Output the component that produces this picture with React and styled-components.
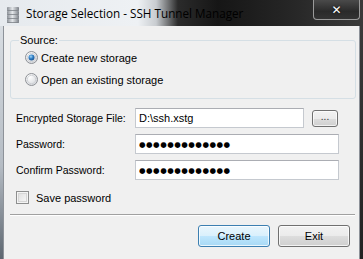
import styled, { createGlobalStyle } from "styled-components";

const GlobalStyle = createGlobalStyle`
  html, body {
    margin: 0;
    padding: 0;
    background: #1e1e1e;
  }
  * {
    box-sizing: border-box;
  }
`;

function StorageIcon() {
  return (
    <svg width="16" height="16" viewBox="0 0 16 16">
      <defs>
        <linearGradient id="disc" x1="0" y1="0" x2="1" y2="0">
          <stop offset="0" stopColor="#8a8f96" />
          <stop offset="0.45" stopColor="#e4e7ea" />
          <stop offset="1" stopColor="#7b8087" />
        </linearGradient>
      </defs>
      {[0, 4, 8, 12].map((y) => (
        <g key={y}>
          <rect x="2" y={y} width="12" height="3.4" rx="0.8" fill="url(#disc)" />
          <rect x="2" y={y + 3.4} width="12" height="0.6" fill="#5d6168" />
        </g>
      ))}
    </svg>
  );
}

function Radio({ checked }) {
  return (
    <svg width="13" height="13" viewBox="0 0 13 13">
      <defs>
        <radialGradient id="rbg" cx="0.35" cy="0.3" r="0.8">
          <stop offset="0" stopColor="#ffffff" />
          <stop offset="1" stopColor="#d3d6da" />
        </radialGradient>
        <radialGradient id="rdot" cx="0.4" cy="0.35" r="0.7">
          <stop offset="0" stopColor="#a6d8f8" />
          <stop offset="0.5" stopColor="#2f7fc6" />
          <stop offset="1" stopColor="#1b4f8a" />
        </radialGradient>
      </defs>
      <circle cx="6.5" cy="6.5" r="6" fill="url(#rbg)" stroke="#8e9196" strokeWidth="1" />
      <circle cx="6.5" cy="6.5" r="4.2" fill="none" stroke="#c9ccd0" strokeWidth="0.8" />
      {checked && <circle cx="6.5" cy="6.5" r="3" fill="url(#rdot)" />}
    </svg>
  );
}

export default function App() {
  return (
    <>
      <GlobalStyle />
      <Window>
        <TitleBar>
          <IconSlot>
            <StorageIcon />
          </IconSlot>
          <Title>Storage Selection - SSH Tunnel Manager</Title>
          <CloseButton>✕</CloseButton>
        </TitleBar>
        <Body>
          <SideFrame $side="left" />
          <Client>
            <GroupBox>
              <Legend>Source:</Legend>
              <RadioRow>
                <Radio checked />
                <Text>Create new storage</Text>
              </RadioRow>
              <RadioRow>
                <Radio />
                <Text>Open an existing storage</Text>
              </RadioRow>
            </GroupBox>

            <Form>
              <Label>Encrypted Storage File:</Label>
              <FieldWithButton>
                <TextBox readOnly value="D:\ssh.xstg" />
                <BrowseButton>...</BrowseButton>
              </FieldWithButton>
              <Label>Password:</Label>
              <TextBox readOnly $secret value={"●".repeat(13)} />
              <Label>Confirm Password:</Label>
              <TextBox readOnly $secret value={"●".repeat(13)} />
            </Form>

            <CheckRow>
              <CheckBox />
              <Text>Save password</Text>
            </CheckRow>

            <Separator />

            <ButtonRow>
              <PushButton $default>Create</PushButton>
              <PushButton>Exit</PushButton>
            </ButtonRow>
          </Client>
          <SideFrame $side="right" />
        </Body>
      </Window>
    </>
  );
}

const Window = styled.div`
  width: 363px;
  height: 259px;
  display: flex;
  flex-direction: column;
  overflow: hidden;
  font-family: "Liberation Sans", Arial, sans-serif;
`;

const TitleBar = styled.div`
  height: 26px;
  flex-shrink: 0;
  display: flex;
  align-items: flex-start;
  position: relative;
  background: linear-gradient(
    90deg,
    #e6eaee 0%,
    #eef1f4 38%,
    #c8ccd0 43%,
    #2b2b2b 49%,
    #161616 60%,
    #262626 80%,
    #3a3a3a 100%
  );
`;

const IconSlot = styled.div`
  width: 16px;
  height: 16px;
  margin: 7px 0 0 5px;
`;

const Title = styled.div`
  margin: 4px 0 0 5px;
  font-family: "Open Sans", "Noto Sans", sans-serif;
  font-size: 11.7px;
  line-height: 18px;
  color: #000;
  white-space: nowrap;
`;

const CloseButton = styled.div`
  position: absolute;
  top: 0;
  right: 3px;
  width: 47px;
  height: 20px;
  border: 1px solid #9a9a9a;
  border-top: none;
  border-radius: 0 0 4px 4px;
  background: linear-gradient(#4a4a4a, #2a2a2a 60%, #333);
  color: #fff;
  font-family: "DejaVu Sans", sans-serif;
  font-weight: bold;
  font-size: 12px;
  display: flex;
  align-items: center;
  justify-content: center;
  text-shadow: 0 0 2px #000;
`;

const Body = styled.div`
  flex: 1;
  display: flex;
`;

const SideFrame = styled.div`
  width: 4px;
  background: ${(p) =>
    p.$side === "left"
      ? "linear-gradient(#d8dde2, #b5bcc4 60%, #5d6670)"
      : "linear-gradient(#3a3a3a, #222)"};
  border-${(p) => (p.$side === "left" ? "right" : "left")}: 1px solid #8d9299;
`;

const Client = styled.div`
  flex: 1;
  background: #f0f0f0;
  padding: 8px 0 0 6px;
  display: flex;
  flex-direction: column;
`;

const GroupBox = styled.fieldset`
  margin: 0;
  width: 346px;
  height: 65px;
  border: 1px solid #d5dfe5;
  border-radius: 3px;
  padding: 5px 0 0 14px;
  display: flex;
  flex-direction: column;
  gap: 9px;
`;

const Legend = styled.legend`
  font-size: 11px;
  color: #000;
  padding: 0 1px;
  margin-left: -6px;
`;

const RadioRow = styled.div`
  display: flex;
  align-items: center;
  gap: 2px;
  height: 13px;
`;

const Text = styled.span`
  font-size: 11px;
  color: #000;
  margin-left: 1px;
`;

const Form = styled.div`
  display: grid;
  grid-template-columns: 119px 204px;
  row-gap: 6px;
  align-items: center;
  margin: 9px 0 0 6px;
`;

const Label = styled.span`
  font-size: 10.5px;
  color: #000;
`;

const FieldWithButton = styled.div`
  display: flex;
  align-items: center;
  gap: 8px;
  width: 204px;
`;

const TextBox = styled.input`
  width: ${(p) => (p.$secret ? "204px" : "169px")};
  height: 20px;
  border: 1px solid #c5c9cf;
  border-top-color: #abadb3;
  background: #fff;
  padding: 0 0 0 3px;
  margin: 0;
  outline: none;
  font-family: ${(p) =>
    p.$secret ? '"DejaVu Sans", sans-serif' : '"Liberation Sans", Arial, sans-serif'};
  font-size: ${(p) => (p.$secret ? "7.5px" : "11px")};
  letter-spacing: ${(p) => (p.$secret ? "0.5px" : "0")};
  color: #000;
`;

const BrowseButton = styled.div`
  width: 26px;
  height: 17px;
  border: 1px solid #707070;
  border-radius: 3px;
  background: linear-gradient(#f2f2f2 0%, #ebebeb 50%, #dddddd 51%, #cfcfcf 100%);
  box-shadow: inset 0 0 0 1px rgba(255, 255, 255, 0.7);
  font-size: 10px;
  color: #333;
  display: flex;
  align-items: center;
  justify-content: center;
  padding-bottom: 3px;
`;

const CheckRow = styled.div`
  display: flex;
  align-items: center;
  gap: 6px;
  margin: 11px 0 0 6px;
  height: 13px;
`;

const CheckBox = styled.div`
  width: 13px;
  height: 13px;
  border: 1px solid #8e8f8f;
  background: linear-gradient(135deg, #dcdcdc, #fafafa);
  box-shadow: inset 0 0 0 1px #f4f4f4, inset 0 0 0 2px #d6d6d6;
`;

const Separator = styled.div`
  width: 345px;
  height: 2px;
  margin-top: 10px;
  border-top: 1px solid #a0a0a0;
  border-bottom: 1px solid #fff;
`;

const ButtonRow = styled.div`
  display: flex;
  justify-content: flex-end;
  gap: 8px;
  margin: 9px 9px 0 0;
`;

const PushButton = styled.div`
  width: 72px;
  height: 22px;
  border-radius: 3px;
  border: 1px solid ${(p) => (p.$default ? "#3c7fb1" : "#707070")};
  background: ${(p) =>
    p.$default
      ? "linear-gradient(#eaf6fd 0%, #d9f0fc 50%, #bee6fd 51%, #a7d9f5 100%)"
      : "linear-gradient(#f2f2f2 0%, #ebebeb 50%, #dddddd 51%, #cfcfcf 100%)"};
  box-shadow: inset 0 0 0 1px rgba(255, 255, 255, 0.75);
  font-size: 11px;
  color: #000;
  display: flex;
  align-items: center;
  justify-content: center;
`;
